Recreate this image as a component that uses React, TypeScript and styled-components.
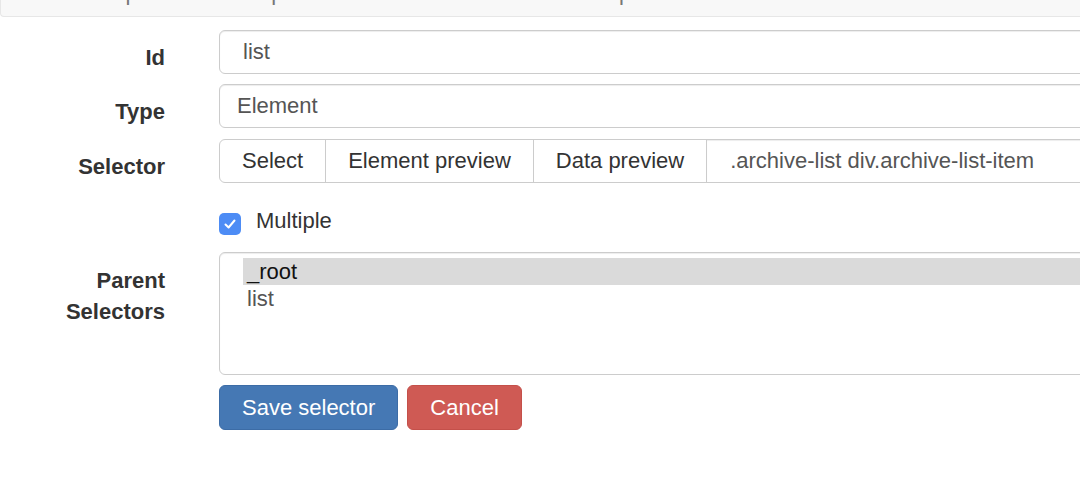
import React from "react";
import styled, { createGlobalStyle } from "styled-components";

const Global = createGlobalStyle`
  html, body { margin: 0; padding: 0; background: #fff; overflow: hidden; }
  body {
    font-family: "Liberation Sans", Arial, Helvetica, sans-serif;
    font-size: 22px;
    color: #333;
  }
  * { box-sizing: border-box; }
`;

const Page = styled.div`
  width: 1080px;
  height: 487px;
  overflow: hidden;
`;

const Navbar = styled.nav`
  height: 17px;
  background: #f8f8f8;
  border-bottom: 1px solid #e7e7e7;
  border-left: 1px solid #e7e7e7;
  border-bottom-left-radius: 4px;
  display: flex;
  align-items: flex-start;
  padding-left: 56px;
  gap: 65px;
  overflow: hidden;
`;

const NavLink = styled.span`
  color: #777;
  line-height: 31px;
  margin-top: -23.5px;
  white-space: nowrap;
  display: inline-flex;
  align-items: center;
`;

const Caret = styled.span`
  display: inline-block;
  margin-left: 2px;
  width: 0;
  height: 0;
  border-top: 4px solid #777;
  border-left: 4px solid transparent;
  border-right: 4px solid transparent;
`;

const Form = styled.form`
  display: flex;
  flex-direction: column;
  gap: 10.25px;
  padding-top: 13px;
  width: 1300px;
`;

const Row = styled.div`
  display: grid;
  grid-template-columns: 165px 1000px;
  column-gap: 54px;
`;

const Label = styled.label<{ $top?: number }>`
  font-weight: bold;
  color: #333;
  text-align: right;
  padding-top: ${(p) => p.$top ?? 12}px;
  line-height: 31px;
  white-space: nowrap;
`;

const TextBox = styled.div<{ $pad: number }>`
  height: 44px;
  border: 1px solid #ccc;
  border-radius: 6px;
  padding: 0 ${(p) => p.$pad}px;
  display: flex;
  align-items: center;
  color: #555;
  background: #fff;
  box-shadow: inset 0 1px 1px rgba(0, 0, 0, 0.075);
  white-space: nowrap;
`;

const InputGroup = styled.div`
  display: flex;
  height: 44px;
`;

const GroupButton = styled.button<{ $first?: boolean }>`
  font: inherit;
  color: #333;
  background: #fff;
  border: 1px solid #ccc;
  margin-left: ${(p) => (p.$first ? 0 : -1)}px;
  border-radius: ${(p) => (p.$first ? "6px 0 0 6px" : "0")};
  padding: 0 22px;
  height: 44px;
  white-space: nowrap;
  cursor: pointer;
`;

const GroupInput = styled.div`
  flex: 1;
  margin-left: -1px;
  height: 44px;
  border: 1px solid #ccc;
  border-radius: 0 6px 6px 0;
  padding: 0 23px;
  display: flex;
  align-items: center;
  color: #555;
  white-space: nowrap;
  box-shadow: inset 0 1px 1px rgba(0, 0, 0, 0.075);
`;

const CheckRow = styled.div`
  display: flex;
  align-items: flex-start;
  gap: 15px;
  padding: 20px 0 7px;
`;

const CheckBox = styled.span`
  width: 22px;
  height: 22px;
  border-radius: 5px;
  background: #4d8cf5;
  display: flex;
  align-items: center;
  justify-content: center;
  flex: none;
`;

const CheckText = styled.span`
  color: #333;
  line-height: 22px;
  margin-top: -3px;
`;

const ListBox = styled.div`
  height: 123px;
  border: 1px solid #ccc;
  border-radius: 6px;
  padding: 5px 0 0 23px;
  box-shadow: inset 0 1px 1px rgba(0, 0, 0, 0.075);
`;

const Option = styled.div<{ $selected?: boolean }>`
  height: 27px;
  line-height: 27px;
  padding-left: 4px;
  background: ${(p) => (p.$selected ? "#dadada" : "transparent")};
  color: ${(p) => (p.$selected ? "#111" : "#555")};
`;

const Actions = styled.div`
  display: flex;
  gap: 9px;
`;

const ActionButton = styled.button<{ $bg: string; $border: string }>`
  font: inherit;
  color: #fff;
  background: ${(p) => p.$bg};
  border: 1px solid ${(p) => p.$border};
  border-radius: 6px;
  height: 45px;
  padding: 0 22px;
  white-space: nowrap;
  cursor: pointer;
`;

const Spacer = styled.div``;

export default function App() {
  return (
    <Page>
      <Global />
      <Navbar>
        <NavLink>Sitemap</NavLink>
        <NavLink>
          Sitemap archive
          <Caret />
        </NavLink>
        <NavLink>
          Create new sitemap
          <Caret />
        </NavLink>
      </Navbar>
      <Form onSubmit={(e) => e.preventDefault()}>
        <Row>
          <Label>Id</Label>
          <TextBox $pad={23}>list</TextBox>
        </Row>
        <Row>
          <Label>Type</Label>
          <TextBox $pad={17}>Element</TextBox>
        </Row>
        <Row>
          <Label>Selector</Label>
          <InputGroup>
            <GroupButton type="button" $first>
              Select
            </GroupButton>
            <GroupButton type="button">Element preview</GroupButton>
            <GroupButton type="button">Data preview</GroupButton>
            <GroupInput>.archive-list div.archive-list-item</GroupInput>
          </InputGroup>
        </Row>
        <Row>
          <Spacer />
          <CheckRow>
            <CheckBox>
              <svg width="14" height="14" viewBox="0 0 14 14">
                <path
                  d="M2.5 7.5 L5.6 10.5 L11.5 3.5"
                  fill="none"
                  stroke="#fff"
                  strokeWidth="2"
                  strokeLinecap="round"
                  strokeLinejoin="round"
                />
              </svg>
            </CheckBox>
            <CheckText>Multiple</CheckText>
          </CheckRow>
        </Row>
        <Row>
          <Label $top={13}>
            Parent
            <br />
            Selectors
          </Label>
          <ListBox>
            <Option $selected>_root</Option>
            <Option>list</Option>
          </ListBox>
        </Row>
        <Row>
          <Spacer />
          <Actions>
            <ActionButton type="button" $bg="#4578b4" $border="#3c6ca6">
              Save selector
            </ActionButton>
            <ActionButton type="button" $bg="#cf5a54" $border="#c4504a">
              Cancel
            </ActionButton>
          </Actions>
        </Row>
      </Form>
    </Page>
  );
}
